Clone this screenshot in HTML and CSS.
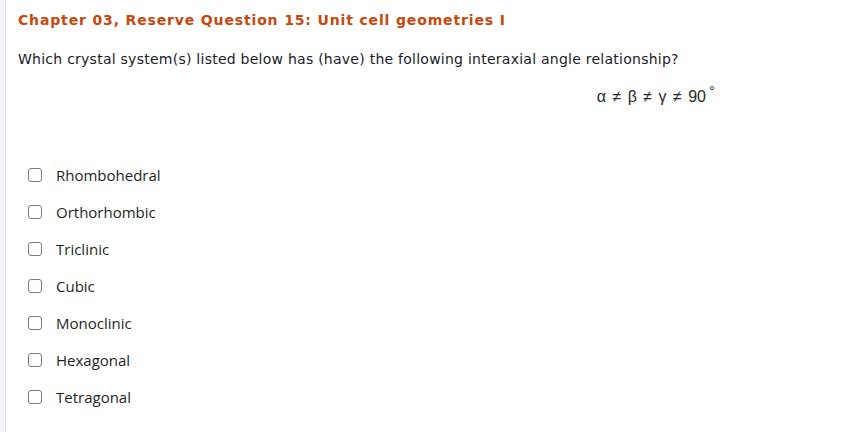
FILE: index.html
```html
<!DOCTYPE html>
<html>
<head>
<meta charset="utf-8">
<link rel="stylesheet" href="styles.css">
</head>
<body>
<div class="page">
  <div class="rail"></div>
  <main class="content">
    <h1 class="title">Chapter 03, Reserve Question 15: Unit cell geometries I</h1>
    <p class="question">Which crystal system(s) listed below has (have) the following interaxial angle relationship?</p>
    <div class="formula-row"><span class="formula">α ≠ β ≠ γ ≠ 90<span class="deg">°</span></span></div>
    <ul class="options">
      <li class="option"><span class="box"></span><span class="label">Rhombohedral</span></li>
      <li class="option"><span class="box"></span><span class="label">Orthorhombic</span></li>
      <li class="option"><span class="box"></span><span class="label">Triclinic</span></li>
      <li class="option"><span class="box"></span><span class="label">Cubic</span></li>
      <li class="option"><span class="box"></span><span class="label">Monoclinic</span></li>
      <li class="option"><span class="box"></span><span class="label">Hexagonal</span></li>
      <li class="option"><span class="box"></span><span class="label">Tetragonal</span></li>
    </ul>
  </main>
</div>
</body>
</html>
```
FILE: styles.css
```css
html, body {
  margin: 0;
  padding: 0;
  background: #ffffff;
}
.page {
  display: flex;
  width: 849px;
  height: 432px;
  overflow: hidden;
}
.rail {
  width: 5px;
  flex: none;
  background: #f4f6f9;
  border-right: 1px solid #dde2e9;
}
.content {
  flex: 1;
  padding-left: 12px;
}
.title {
  margin: 11px 0 0 0;
  font-family: "DejaVu Sans", Verdana, sans-serif;
  font-weight: bold;
  font-size: 14px;
  letter-spacing: 0.85px;
  line-height: 18px;
  color: #c9470b;
}
.question {
  margin: 21px 0 0 0;
  font-family: "DejaVu Sans", Verdana, sans-serif;
  font-size: 14px;
  letter-spacing: 0.25px;
  line-height: 18px;
  color: #1a1a2a;
}
.formula-row {
  width: 697px;
  display: flex;
  justify-content: flex-end;
  margin-top: 19px;
}
.formula {
  font-family: "Liberation Sans", Arial, sans-serif;
  font-size: 16px;
  line-height: 20px;
  color: #2a2a2a;
  word-spacing: 2px;
}
.deg {
  position: relative;
  top: -6px;
  margin-left: 3px;
  font-size: 15px;
}
.options {
  list-style: none;
  margin: 58px 0 0 0;
  padding: 0 0 0 10px;
  display: flex;
  flex-direction: column;
  gap: 17px;
}
.option {
  display: flex;
  align-items: center;
  height: 20px;
}
.box {
  width: 12px;
  height: 12px;
  border: 1px solid #7a7a7a;
  border-radius: 3px;
  background: #fff;
  flex: none;
}
.label {
  margin-left: 14px;
  font-family: "Open Sans", "Segoe UI", sans-serif;
  font-size: 15px;
  color: #1f1f1f;
}
```
